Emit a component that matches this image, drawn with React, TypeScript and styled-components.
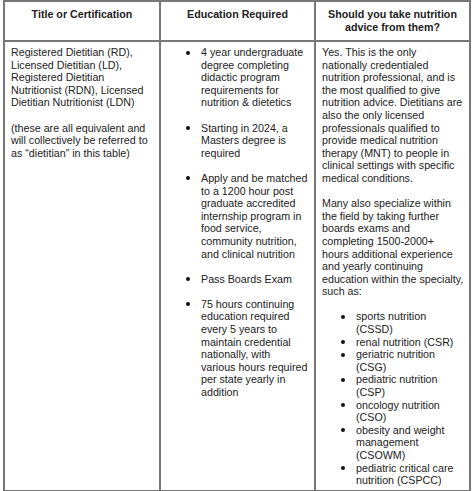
import styled, { createGlobalStyle } from "styled-components";
import type { ReactNode } from "react";

const GlobalStyle = createGlobalStyle`
  html, body {
    margin: 0;
    padding: 0;
    background: #ffffff;
  }
  body {
    font-family: "Liberation Sans", Arial, sans-serif;
    color: #222;
  }
`;

const Page = styled.div`
  padding: 0 0 0 3px;
  width: 474px;
  box-sizing: border-box;
`;

const Table = styled.table`
  border-collapse: collapse;
  table-layout: fixed;
  width: 466px;
  font-size: 10.7px;
  line-height: 12.6px;
  color: #222;
`;

const Head = styled.th`
  border: 2px solid #777;
  padding: 6px 4px 6px;
  font-weight: 700;
  text-align: center;
  vertical-align: top;
  height: 26px;
`;

const Cell = styled.td<{ $padRight: number }>`
  border: 2px solid #777;
  padding: 4px ${(p) => p.$padRight}px 3px 6px;
  vertical-align: top;
  text-align: left;
`;

const Para = styled.p<{ $last?: boolean }>`
  margin: 0 0 ${(p) => (p.$last ? 0 : 12.6)}px;
`;

const List = styled.ul<{ $spaced?: boolean }>`
  list-style: none;
  margin: 0;
  padding: 0;
  display: flex;
  flex-direction: column;
  gap: ${(p) => (p.$spaced ? 12.6 : 0)}px;
`;

const Item = styled.li`
  display: flex;
  align-items: flex-start;
  &::before {
    content: "";
    flex: 0 0 4px;
    height: 4px;
    border-radius: 50%;
    background: #111;
    margin: 4.5px 11px 0 19px;
  }
`;

const education: ReactNode[] = [
  "4 year undergraduate degree completing didactic program requirements for nutrition & dietetics",
  "Starting in 2024, a Masters degree is required",
  "Apply and be matched to a 1200 hour post graduate accredited internship program in food service, community nutrition, and clinical nutrition",
  "Pass Boards Exam",
  <span>
    75 hours continuing education required every 5 years to maintain
    credential nationally, with
    <br />
    various hours required per state yearly in addition
  </span>,
];

const specialties = [
  "sports nutrition (CSSD)",
  "renal nutrition (CSR)",
  "geriatric nutrition (CSG)",
  "pediatric nutrition (CSP)",
  "oncology nutrition (CSO)",
  "obesity and weight management (CSOWM)",
  "pediatric critical care nutrition (CSPCC)",
];

export default function App() {
  return (
    <Page>
      <GlobalStyle />
      <Table>
        <colgroup>
          <col style={{ width: 156 }} />
          <col style={{ width: 155 }} />
          <col style={{ width: 155 }} />
        </colgroup>
        <thead>
          <tr>
            <Head>Title or Certification</Head>
            <Head>Education Required</Head>
            <Head>Should you take nutrition advice from them?</Head>
          </tr>
        </thead>
        <tbody>
          <tr>
            <Cell $padRight={4}>
              <Para>
                Registered Dietitian (RD), Licensed Dietitian (LD), Registered
                Dietitian Nutritionist (RDN), Licensed Dietitian Nutritionist
                (LDN)
              </Para>
              <Para $last>
                (these are all equivalent and will collectively be referred to
                as “dietitian” in this table)
              </Para>
            </Cell>
            <Cell $padRight={5.7}>
              <List $spaced>
                {education.map((e, i) => (
                  <Item key={i}>{e}</Item>
                ))}
              </List>
            </Cell>
            <Cell $padRight={5}>
              <Para>
                Yes. This is the only nationally credentialed nutrition
                professional, and is the most qualified to give nutrition
                advice. Dietitians are also the only licensed professionals
                qualified to provide medical nutrition therapy (MNT) to people
                in clinical settings with specific medical conditions.
              </Para>
              <Para>
                Many also specialize within the field by taking further boards
                exams and completing 1500-2000+
                <br />
                hours additional experience and yearly continuing education
                within the specialty, such as:
              </Para>
              <List>
                {specialties.map((s) => (
                  <Item key={s}>{s}</Item>
                ))}
              </List>
            </Cell>
          </tr>
        </tbody>
      </Table>
    </Page>
  );
}
